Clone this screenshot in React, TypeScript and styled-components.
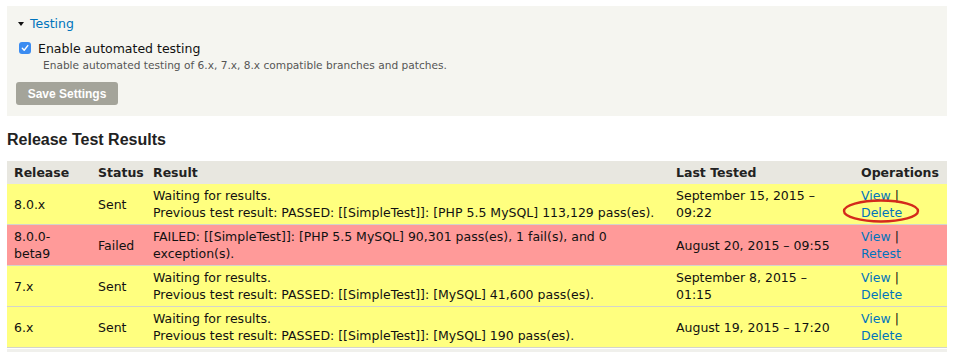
import React from "react";
import styled, { createGlobalStyle } from "styled-components";

const Global = createGlobalStyle`
  html, body { margin: 0; padding: 0; background: #fff; }
  body { font-family: "DejaVu Sans", Verdana, sans-serif; color: #222; }
`;

const Page = styled.div`
  padding: 6px 8px 0 7px;
  width: 940px;
`;

const Panel = styled.section`
  background: #f5f5f0;
  height: 110px;
  box-sizing: border-box;
  padding: 9px 10px 0 10px;
  display: flex;
  flex-direction: column;
`;

const Legend = styled.div`
  display: flex;
  align-items: center;
  gap: 6px;
  font-size: 12.5px;
  color: #0074bd;
  height: 16px;
`;

const Caret = styled.span`
  width: 0;
  height: 0;
  border-left: 3.5px solid transparent;
  border-right: 3.5px solid transparent;
  border-top: 4px solid #111;
  margin-left: 1px;
  margin-top: 1px;
`;

const CheckRow = styled.label`
  display: flex;
  align-items: center;
  gap: 7px;
  margin-top: 9px;
  margin-left: 2px;
  font-size: 12.5px;
  color: #111;
  height: 16px;
`;

const Box = styled.span`
  width: 12px;
  height: 12px;
  border-radius: 3px;
  background: #3b8cf1;
  display: inline-flex;
  align-items: center;
  justify-content: center;
`;

const Description = styled.div`
  font-size: 10.6px;
  color: #555;
  margin: 3px 0 0 26px;
`;

const Button = styled.button`
  align-self: flex-start;
  margin-top: 11px;
  margin-left: -1px;
  width: 102px;
  height: 23px;
  border: none;
  border-radius: 3px;
  background: #a4a49a;
  color: #fff;
  font-family: "Liberation Sans", Arial, sans-serif;
  font-weight: bold;
  font-size: 12px;
  padding: 0;
`;

const Heading = styled.h2`
  margin: 14px 0 0 0;
  font-family: "Liberation Sans", Arial, sans-serif;
  font-weight: bold;
  font-size: 16px;
  line-height: 20px;
  color: #222;
`;

const Table = styled.table`
  margin-top: 11px;
  width: 940px;
  border-collapse: collapse;
  table-layout: fixed;
  font-size: 12.5px;
`;

const Th = styled.th<{ $w: number }>`
  width: ${(p) => p.$w}px;
  text-align: left;
  background: #e8e7e0;
  font-weight: bold;
  color: #222;
  height: 23px;
  padding: 0 7px;
  box-sizing: border-box;
`;

const Tr = styled.tr<{ $tone: "ok" | "fail" }>`
  background: ${(p) => (p.$tone === "fail" ? "#ff9a99" : "#ffff7f")};
  border-bottom: 1px solid #d4d4cc;
`;

const Td = styled.td<{ $padRight?: number }>`
  padding: 3px ${(p) => p.$padRight ?? 7}px 3px 7px;
  line-height: 17px;
  vertical-align: middle;
  color: #111;
`;

const OpsCell = styled(Td)`
  position: relative;
`;

const Link = styled.a`
  color: #0074bd;
  text-decoration: none;
`;

const Sep = styled.span`
  color: #111;
`;

const Annotation = styled.svg`
  position: absolute;
  left: -13px;
  top: 14px;
  pointer-events: none;
`;

const BottomRule = styled.div`
  height: 3px;
  background: #f0f0ec;
  margin-top: 1px;
`;

type Row = {
  release: string;
  status: string;
  tone: "ok" | "fail";
  result: React.ReactNode;
  tested: string;
  op: string;
  circled?: boolean;
};

const rows: Row[] = [
  {
    release: "8.0.x",
    status: "Sent",
    tone: "ok",
    result: (
      <>
        Waiting for results.
        <br />
        Previous test result: PASSED: [[SimpleTest]]: [PHP 5.5 MySQL] 113,129 pass(es).
      </>
    ),
    tested: "September 15, 2015 – 09:22",
    op: "Delete",
    circled: true,
  },
  {
    release: "8.0.0-beta9",
    status: "Failed",
    tone: "fail",
    result: <>FAILED: [[SimpleTest]]: [PHP 5.5 MySQL] 90,301 pass(es), 1 fail(s), and 0 exception(s).</>,
    tested: "August 20, 2015 – 09:55",
    op: "Retest",
  },
  {
    release: "7.x",
    status: "Sent",
    tone: "ok",
    result: (
      <>
        Waiting for results.
        <br />
        Previous test result: PASSED: [[SimpleTest]]: [MySQL] 41,600 pass(es).
      </>
    ),
    tested: "September 8, 2015 – 01:15",
    op: "Delete",
  },
  {
    release: "6.x",
    status: "Sent",
    tone: "ok",
    result: (
      <>
        Waiting for results.
        <br />
        Previous test result: PASSED: [[SimpleTest]]: [MySQL] 190 pass(es).
      </>
    ),
    tested: "August 19, 2015 – 17:20",
    op: "Delete",
  },
];

export default function App() {
  return (
    <>
      <Global />
      <Page>
        <Panel>
          <Legend>
            <Caret />
            <span>Testing</span>
          </Legend>
          <CheckRow>
            <Box>
              <svg width="8" height="8" viewBox="0 0 8 8">
                <path d="M1.3 4.3 L3.2 6.2 L6.8 1.6" fill="none" stroke="#fff" strokeWidth="1.4" strokeLinecap="round" strokeLinejoin="round" />
              </svg>
            </Box>
            Enable automated testing
          </CheckRow>
          <Description>Enable automated testing of 6.x, 7.x, 8.x compatible branches and patches.</Description>
          <Button>Save Settings</Button>
        </Panel>
        <Heading>Release Test Results</Heading>
        <Table>
          <thead>
            <tr>
              <Th $w={84}>Release</Th>
              <Th $w={55}>Status</Th>
              <Th $w={523}>Result</Th>
              <Th $w={185}>Last Tested</Th>
              <Th $w={93}>Operations</Th>
            </tr>
          </thead>
          <tbody>
            {rows.map((r) => (
              <Tr key={r.release} $tone={r.tone}>
                <Td>{r.release}</Td>
                <Td>{r.status}</Td>
                <Td>{r.result}</Td>
                <Td $padRight={12}>{r.tested}</Td>
                <OpsCell>
                  <Link href="#">View</Link> <Sep>|</Sep>
                  <br />
                  <Link href="#">{r.op}</Link>
                  {r.circled && (
                    <Annotation width="80" height="26" viewBox="0 0 80 26">
                      <ellipse cx="40" cy="13" rx="37" ry="10.5" fill="none" stroke="#d42a1c" strokeWidth="2.4" />
                    </Annotation>
                  )}
                </OpsCell>
              </Tr>
            ))}
          </tbody>
        </Table>
        <BottomRule />
      </Page>
    </>
  );
}
